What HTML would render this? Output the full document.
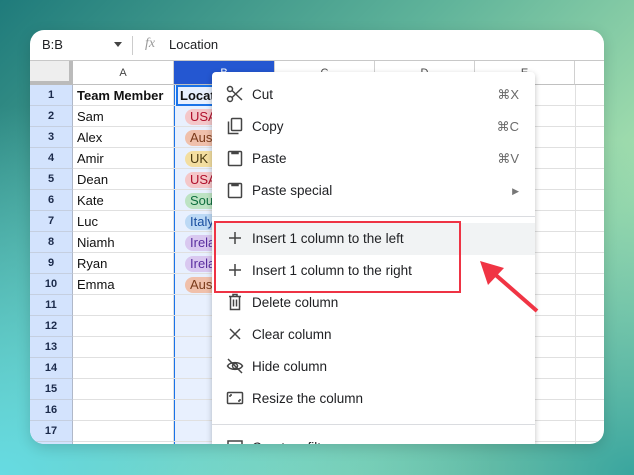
<!DOCTYPE html>
<html><head><style>
*{box-sizing:border-box;margin:0;padding:0}
body{width:634px;height:475px;overflow:hidden;font-family:"Liberation Sans",Arial,sans-serif;position:relative;
background:linear-gradient(135deg,#1f7b7b 0%,#5fb39a 40%,#a9e2b0 75%,#c4f0c0 100%);}
.bg2{position:absolute;inset:0;background:radial-gradient(ellipse at 0% 100%,#66dbe2 0%,rgba(102,219,226,0) 55%),radial-gradient(ellipse at 100% 100%,#39a59e 0%,rgba(57,165,158,0) 50%);}
.card{position:absolute;left:30px;top:30px;width:574px;height:414px;background:#fff;border-radius:14px;overflow:hidden;box-shadow:0 4px 14px rgba(0,0,0,.15)}
.fb{position:absolute;left:0;top:0;width:100%;height:31px;border-bottom:1px solid #c8c8c8;font-size:13px;color:#202124}
.abs{position:absolute}
.hdr{position:absolute;top:31px;height:24px;border-right:1px solid #d0d0d0;border-bottom:1px solid #c0c0c0;background:#fff;font-size:11px;color:#444;text-align:center;line-height:24px}
.rh{position:absolute;left:0;width:43px;height:21px;background:#d3e3fd;border-bottom:1px solid #c5cfe0;border-right:1px solid #b0b8c8;font-size:11px;font-weight:bold;color:#1b2a4a;text-align:center;line-height:21px}
.row{position:absolute;left:43px;width:531px;height:21px;border-bottom:1px solid #e0e0e0}
.cell{position:absolute;font-size:13px;color:#111;line-height:21px}
.chip{position:absolute;left:155px;height:16px;border-radius:8px;font-size:13px;line-height:16px;padding-left:5px;width:60px}
.vl{position:absolute;top:55px;bottom:0;width:1px;background:#e0e0e0}
.menu{position:absolute;left:182px;top:42px;width:323px;height:400px;background:#fff;box-shadow:0 2px 6px rgba(0,0,0,.25);border-radius:4px}
.mi{position:absolute;left:0;width:323px;height:32px;font-size:13.5px;color:#202124;line-height:32px}
.mi .t{position:absolute;left:40px}
.mi .k{position:absolute;right:16px;color:#6b6b6b;font-size:13px}
.mi svg{position:absolute;left:14px;top:6px}
.sep{position:absolute;left:0;width:323px;height:1px;background:#dadce0}
</style></head><body>
<div class="bg2"></div>
<div class="card">
 <div class="fb">
  <span class="abs" style="left:12px;top:7px">B:B</span>
  <span class="abs" style="left:84px;top:12px;width:0;height:0;border-left:4px solid transparent;border-right:4px solid transparent;border-top:5px solid #444"></span>
  <span class="abs" style="left:102px;top:6px;width:1px;height:19px;background:#ccc"></span>
  <span class="abs" style="left:115px;top:6px;color:#999;font-style:italic;font-family:'Liberation Serif',serif;font-size:14px">fx</span>
  <span class="abs" style="left:139px;top:7px">Location</span>
 </div>
 <div class="hdr" style="left:0;width:43px;background:#eee;border-right:4px solid #bbb;border-bottom:4px solid #bbb"></div>
 <div class="hdr" style="left:43px;width:101px">A</div>
 <div class="hdr" style="left:144px;width:101px;background:#2457d1;color:#fff">B</div>
 <div class="hdr" style="left:245px;width:100px">C</div>
 <div class="hdr" style="left:345px;width:100px">D</div>
 <div class="hdr" style="left:445px;width:100px">E</div>
 <div class="hdr" style="left:545px;width:40px"></div>
 <div class="abs" style="left:144px;top:55px;width:101px;bottom:0;background:#e8f0fe;border-left:1px solid #1a73e8;border-right:1px solid #1a73e8"></div>
 <div class="vl" style="left:545px"></div>
 <div id="rows"></div>
 <div class="menu">
  <div class="mi" style="top:7px"><svg width="18" height="18" viewBox="0 0 18 18" fill="none" stroke="#444" stroke-width="1.5"><circle cx="4" cy="4" r="2.5"/><circle cx="4" cy="14" r="2.5"/><path d="M6 5.5L16 15M6 12.5L16 3"/></svg><span class="t">Cut</span><span class="k">⌘X</span></div>
  <div class="mi" style="top:39px"><svg width="18" height="18" viewBox="0 0 18 18" fill="none" stroke="#444" stroke-width="1.5"><rect x="5.5" y="1.5" width="10" height="12" rx="1"/><path d="M2.5 4.5V16.5H12.5"/></svg><span class="t">Copy</span><span class="k">⌘C</span></div>
  <div class="mi" style="top:71px"><svg width="18" height="18" viewBox="0 0 18 18" fill="none" stroke="#444" stroke-width="1.5"><rect x="2.5" y="2.5" width="13" height="14" rx="1"/><path d="M6 2.5V4.5H12V2.5" fill="#444"/></svg><span class="t">Paste</span><span class="k">⌘V</span></div>
  <div class="mi" style="top:103px"><svg width="18" height="18" viewBox="0 0 18 18" fill="none" stroke="#444" stroke-width="1.5"><rect x="2.5" y="2.5" width="13" height="14" rx="1"/><path d="M6 2.5V4.5H12V2.5" fill="#444"/></svg><span class="t">Paste special</span><span class="k" style="font-size:9px;color:#777">▶</span></div>
  <div class="sep" style="top:144px"></div>
  <div class="mi" style="top:151px;background:#f1f3f4"><svg width="18" height="18" viewBox="0 0 18 18" stroke="#444" stroke-width="1.5"><path d="M9 3V15M3 9H15"/></svg><span class="t">Insert 1 column to the left</span></div>
  <div class="mi" style="top:183px"><svg width="18" height="18" viewBox="0 0 18 18" stroke="#444" stroke-width="1.5"><path d="M9 3V15M3 9H15"/></svg><span class="t">Insert 1 column to the right</span></div>
  <div class="mi" style="top:215px"><svg width="18" height="18" viewBox="0 0 18 18" fill="none" stroke="#444" stroke-width="1.5"><path d="M3 3.5H15M7 3.5V1.5H11V3.5M4.5 3.5V16.5H13.5V3.5M7.5 6.5V13.5M10.5 6.5V13.5"/></svg><span class="t">Delete column</span></div>
  <div class="mi" style="top:247px"><svg width="18" height="18" viewBox="0 0 18 18" stroke="#444" stroke-width="1.5"><path d="M4 4L14 14M14 4L4 14"/></svg><span class="t">Clear column</span></div>
  <div class="mi" style="top:279px"><svg width="18" height="18" viewBox="0 0 18 18" fill="none" stroke="#444" stroke-width="1.5"><path d="M1.5 9C4 4.5 14 4.5 16.5 9C14 13.5 4 13.5 1.5 9Z"/><circle cx="9" cy="9" r="2.5"/><path d="M2 2L16 16"/></svg><span class="t">Hide column</span></div>
  <div class="mi" style="top:311px"><svg width="18" height="18" viewBox="0 0 18 18" fill="none" stroke="#444" stroke-width="1.5"><rect x="1.5" y="3.5" width="15" height="11" rx="1"/><path d="M4 6V8M4 6H6M14 12V10M14 12H12"/></svg><span class="t">Resize the column</span></div>
  <div class="sep" style="top:352px"></div>
  <div class="mi" style="top:360px"><svg width="18" height="18" viewBox="0 0 18 18" fill="none" stroke="#444" stroke-width="1.5"><rect x="2" y="3" width="14" height="12"/></svg><span class="t">Create a filter</span></div>
 </div>
 <div class="abs" style="left:184px;top:191px;width:247px;height:72px;border:2.5px solid #ee3344"></div>
</div>
<svg class="abs" style="left:0;top:0" width="634" height="475"><path d="M537 311L490 270" stroke="#f03444" stroke-width="4"/><path d="M480 261L504 268L488 285Z" fill="#f03444"/></svg>
<script>
var d=[["Team Member","Locat",""],["Sam","USA","#f4c7c9","#b0102c"],["Alex","Aus","#f0c0ab","#7a3a1a"],["Amir","UK","#f3dea0","#4a3a10"],["Dean","USA","#f4c7c9","#b0102c"],["Kate","Sou","#bde3c4","#0e6e3e"],["Luc","Italy","#bcd9f5","#1a4fa0"],["Niamh","Irela","#d9c8f0","#5a2ea0"],["Ryan","Irela","#d9c8f0","#5a2ea0"],["Emma","Aus","#f0c0ab","#7a3a1a"]];
var h="";for(var i=0;i<18;i++){var y=55+i*21;h+='<div class="rh" style="top:'+y+'px">'+(i+1)+'</div><div class="row" style="top:'+y+'px"><div class="abs" style="left:100px;top:0;width:1px;height:21px;background:#e0e0e0"></div></div>';
if(i<10){var r=d[i];if(i==0){h+='<div class="cell" style="left:47px;top:'+y+'px;font-weight:bold">'+r[0]+'</div><div class="cell" style="left:146px;top:'+(y)+'px;font-weight:bold;border:2px solid #1a73e8;height:21px;width:40px;padding-left:2px;line-height:17px">'+r[1]+'</div>';}
else{h+='<div class="cell" style="left:47px;top:'+y+'px">'+r[0]+'</div><div class="chip" style="top:'+(y+3)+'px;background:'+r[2]+';color:'+r[3]+'">'+r[1]+'</div>';}}}
document.getElementById("rows").outerHTML=h;
</script>
</body></html>
